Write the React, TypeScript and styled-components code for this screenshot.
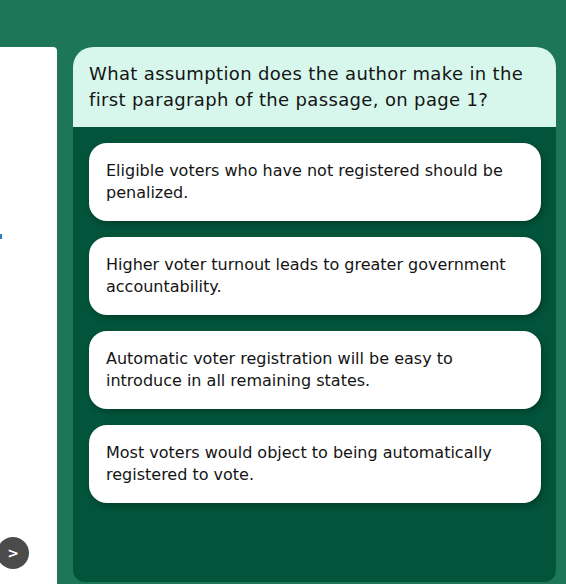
import React from 'react';
import styled, { createGlobalStyle } from 'styled-components';

const GlobalStyle = createGlobalStyle`
  html, body {
    margin: 0;
    padding: 0;
    background: #1d7657;
    font-family: 'DejaVu Sans', 'Liberation Sans', sans-serif;
    overflow: hidden;
  }
`;

const Page = styled.div`
  display: flex;
  align-items: flex-start;
  gap: 16px;
  height: 584px;
  padding-top: 47px;
  box-sizing: border-box;
`;

const PassagePanel = styled.div`
  position: relative;
  flex: 0 0 57px;
  height: 537px;
  background: #ffffff;
  border-top-right-radius: 4px;
  display: flex;
  flex-direction: column;
`;

const LinkStub = styled.span`
  display: block;
  width: 2px;
  height: 5px;
  margin-top: 187px;
  background: #2c7fc6;
`;

const NextButton = styled.button`
  position: absolute;
  left: -3px;
  bottom: 15px;
  width: 32px;
  height: 32px;
  border: none;
  border-radius: 50%;
  background: #4b4b4b;
  color: #ffffff;
  font-family: 'DejaVu Sans', sans-serif;
  font-weight: bold;
  font-size: 14px;
  padding: 0;
  display: flex;
  align-items: center;
  justify-content: center;
`;

const QuestionCard = styled.section`
  flex: 0 0 483px;
  height: 535px;
  border-radius: 20px 20px 12px 12px;
  overflow: hidden;
  display: flex;
  flex-direction: column;
  background: #02543a;
`;

const QuestionHeader = styled.h2`
  margin: 0;
  background: #d7f7ec;
  padding: 14px 16px;
  font-size: 18px;
  letter-spacing: 0.35px;
  line-height: 26px;
  font-weight: normal;
  color: #141414;
`;

const Choices = styled.div`
  display: flex;
  flex-direction: column;
  gap: 16px;
  padding: 16px 15px 16px 16px;
`;

const Choice = styled.button`
  display: flex;
  align-items: center;
  height: 78px;
  padding: 0 17px;
  border: none;
  border-radius: 18px;
  background: #ffffff;
  box-shadow: 2px 3px 6px rgba(0, 0, 0, 0.25);
  text-align: left;
  font-family: inherit;
  font-size: 16px;
  line-height: 22px;
  color: #141414;
`;

const choices = [
  'Eligible voters who have not registered should be penalized.',
  'Higher voter turnout leads to greater government accountability.',
  'Automatic voter registration will be easy to introduce in all remaining states.',
  'Most voters would object to being automatically registered to vote.',
];

export default function App() {
  return (
    <>
      <GlobalStyle />
      <Page>
        <PassagePanel>
          <LinkStub />
          <NextButton aria-label="Next">&gt;</NextButton>
        </PassagePanel>
        <QuestionCard>
          <QuestionHeader>
            What assumption does the author make in the first paragraph of the passage, on page 1?
          </QuestionHeader>
          <Choices>
            {choices.map((c) => (
              <Choice key={c}>{c}</Choice>
            ))}
          </Choices>
        </QuestionCard>
      </Page>
    </>
  );
}
